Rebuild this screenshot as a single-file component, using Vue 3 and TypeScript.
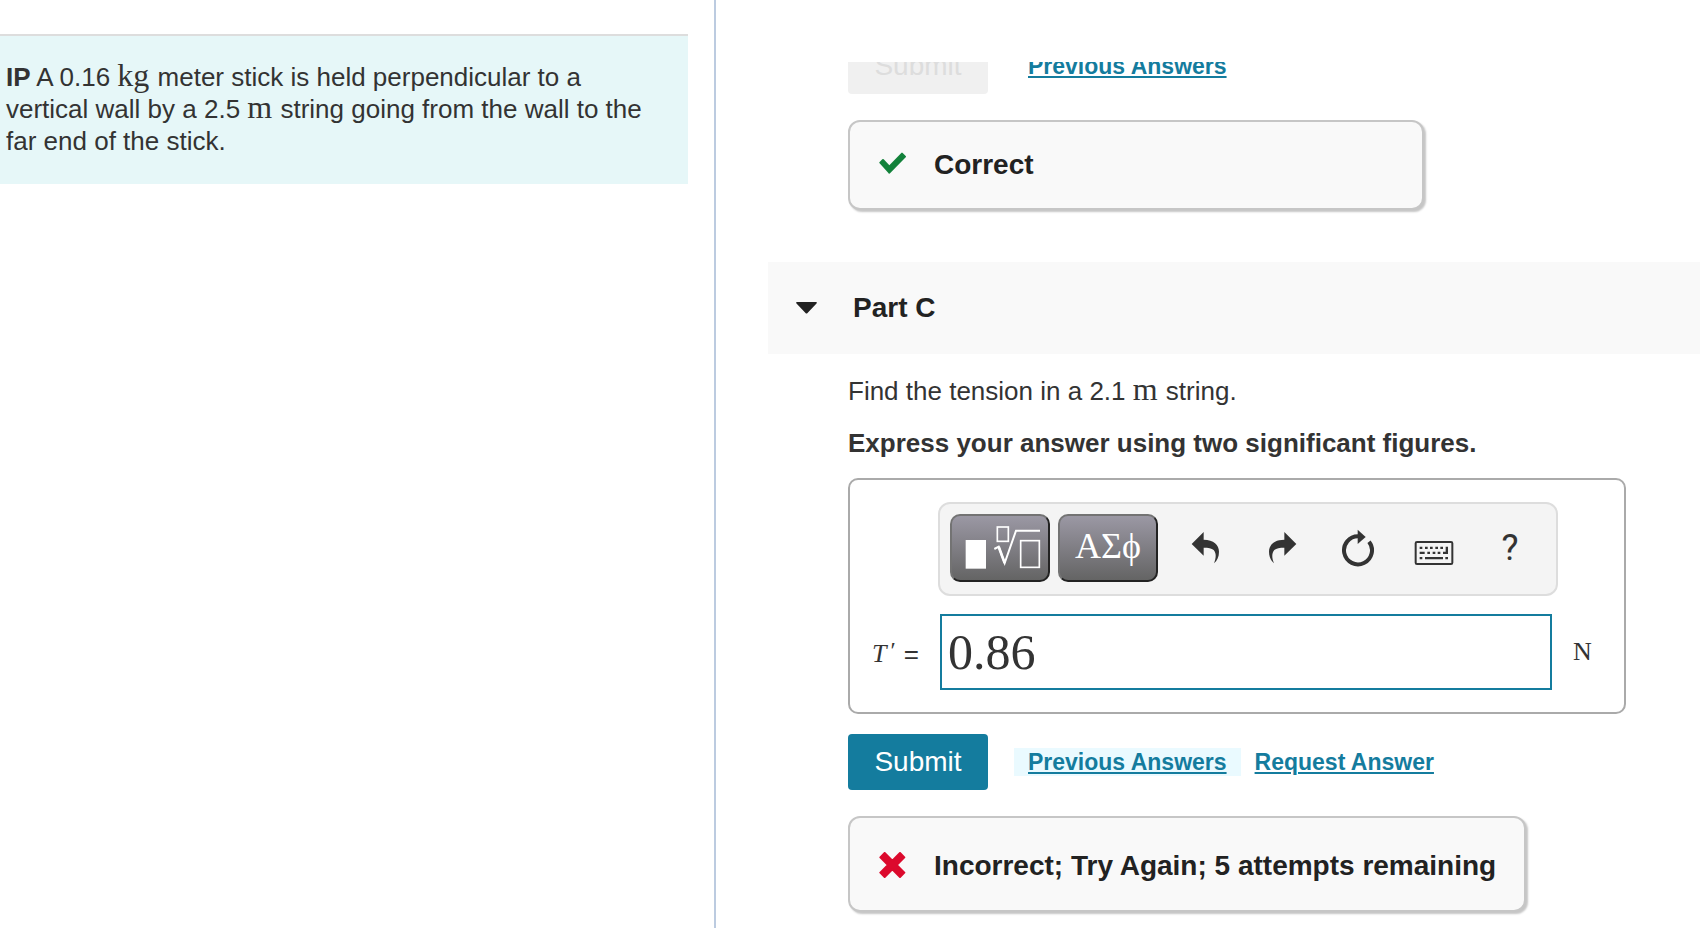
<script setup lang="ts">
import { ref } from 'vue'

const answer = ref<string>('0.86')
const expanded = ref<boolean>(true)
const attemptsRemaining = 5
</script>

<template>
  <div class="page">
    <aside class="problem-pane">
      <section class="problem">
        <p>
          <b>IP</b> A 0.16 <span class="unit">kg</span> meter stick is held perpendicular to a
          vertical wall by a 2.5 <span class="unit">m</span> string going from the wall to the far
          end of the stick.
        </p>
      </section>
    </aside>

    <main class="work-pane">
      <div class="scroller">
        <section class="part previous-part">
          <div class="actions">
            <button class="submit" type="button" disabled>Submit</button>
            <a class="link first" href="#previous-b">Previous Answers</a>
          </div>
          <div class="feedback correct" role="status">
            <svg class="mark" viewBox="0 0 84 84" aria-hidden="true">
              <path
                d="M7 35 L15 27 L34 47 L72 8 L81 17 L34 65Z"
                fill="#13823b"
                stroke="#13823b"
                stroke-width="6"
                stroke-linejoin="round"
              />
            </svg>
            <span>Correct</span>
          </div>
        </section>

        <h2 class="part-header">
          <button type="button" :aria-expanded="expanded" @click="expanded = !expanded">
            <svg class="caret" viewBox="0 0 21 12" aria-hidden="true">
              <path d="M1 0 H20 Q21.500 0.500 20.500 1.500 L11.500 11 Q10.500 12 9.500 11 L0.500 1.500 Q-0.500 0.500 1 0Z" fill="#222" />
            </svg>
            <span>Part C</span>
          </button>
        </h2>

        <section v-show="expanded" class="part">
          <p class="question">Find the tension in a 2.1 <span class="unit">m</span> string.</p>
          <p class="instruction">Express your answer using two significant figures.</p>

          <div class="answer-box">
            <div class="toolbar" role="toolbar" aria-label="Math tools">
              <button class="palette" type="button" aria-label="Templates">
                <svg viewBox="36 33 288 192" aria-hidden="true">
                  <rect x="77" y="105" width="61" height="86" fill="#fff" />
                  <g fill="none" stroke="#fff">
                    <rect x="172" y="66" width="33" height="43" stroke-width="5" />
                    <rect x="242" y="107" width="56" height="80" stroke-width="5" />
                    <path d="M163 132 L176 125 L194 174 L228 77 H300" stroke-width="6" />
                    <path d="M176 125 L194 174" stroke-width="8" />
                  </g>
                </svg>
              </button>
              <button class="palette greek" type="button" aria-label="Greek letters">ΑΣϕ</button>
              <div class="tools">
                <button type="button" aria-label="Undo">
                  <svg viewBox="81 114 120 120" aria-hidden="true">
                    <path d="M98 162 L134 126 V149 C164 149 180 164 180 185 C180 201 174 212 165 220 C172 202 172 190 164 180 C158 174 148 173 134 173 V197Z" />
                  </svg>
                </button>
                <button type="button" aria-label="Redo">
                  <svg viewBox="309 114 120 120" aria-hidden="true">
                    <path d="M412 162 L376 126 V149 C346 149 330 164 330 185 C330 201 336 212 345 220 C338 202 338 190 346 180 C352 174 362 173 376 173 V197Z" />
                  </svg>
                </button>
                <button type="button" aria-label="Reset">
                  <svg viewBox="540 114 120 120" aria-hidden="true">
                    <path d="M601 139 A42 42 0 1 0 633 155" fill="none" stroke="#333" stroke-width="12" />
                    <path d="M599 119 L623 141 L599 162Z" />
                  </svg>
                </button>
                <button type="button" aria-label="Keyboard shortcuts">
                  <svg viewBox="108 174 120 120" aria-hidden="true">
                    <rect x="113" y="216" width="110" height="66" rx="4" fill="none" stroke="#333" stroke-width="6" />
                    <path
                      d="M125 230h8v7h-8z M141 230h8v7h-8z M156 230h8v7h-8z M172 230h8v7h-8z M187 230h8v7h-8z M203 230h7v22h-15v-7h8z M125 245h15v7h-15z M148 245h8v7h-8z M164 245h8v7h-8z M179 245h8v7h-8z M125 261h8v7h-8z M141 261h54v7h-54z M202 261h8v7h-8z"
                    />
                  </svg>
                </button>
                <button class="help" type="button" aria-label="Help">?</button>
              </div>
            </div>

            <div class="entry">
              <label for="tension"><i>T</i><sup>′</sup><span>=</span></label>
              <input id="tension" v-model="answer" type="text" autocomplete="off" />
              <span class="newton">N</span>
            </div>
          </div>

          <div class="actions">
            <button class="submit" type="button">Submit</button>
            <a class="link first highlighted" href="#previous-c">Previous Answers</a>
            <a class="link" href="#request">Request Answer</a>
          </div>
          <div class="feedback incorrect" role="status">
            <svg class="mark" viewBox="0 0 84 84" aria-hidden="true">
              <path
                d="M43 26 L66 3 L79 16 L56 39 L79 62 L66 75 L43 52 L20 75 L7 62 L30 39 L7 16 L20 3Z"
                fill="#dc0a2d"
                stroke="#dc0a2d"
                stroke-width="6"
                stroke-linejoin="round"
              />
            </svg>
            <span>Incorrect; Try Again; {{ attemptsRemaining }} attempts remaining</span>
          </div>
        </section>
      </div>
    </main>
  </div>
</template>

<style>
body {
  margin: 0;
  background: #fff;
}
</style>

<style scoped>
* {
  box-sizing: border-box;
}

.page {
  display: flex;
  min-height: 100vh;
  color: #333;
  font-family: 'Liberation Sans', Arial, sans-serif;
  font-size: 26px;
  line-height: 32px;
}

p,
h2 {
  margin: 0;
}

button {
  margin: 0;
  padding: 0;
  border: 0;
  background: none;
  color: inherit;
  font: inherit;
  cursor: pointer;
}

.unit {
  margin-right: 1px;
  font-family: 'Liberation Serif', 'Times New Roman', serif;
  font-size: 32px;
  line-height: 24px;
}

.problem-pane {
  flex: 0 0 42%;
  padding: 34px 26px 0 0;
}

.problem {
  padding: 25px 24px 27px 6px;
  border-top: 2px solid #ddd;
  background: #e6f7f8;
}

.work-pane {
  flex: 1;
  min-width: 0;
  padding-top: 62px;
  border-left: 2px solid #bccbe0;
}

.scroller {
  overflow: hidden;
  padding: 0 0 16px 52px;
}

.part {
  padding-left: 80px;
}

.previous-part {
  margin-top: -24px;
}

.actions {
  display: flex;
  align-items: center;
}

.submit {
  width: 140px;
  height: 56px;
  border-radius: 4px;
  background: #147c9e;
  color: #fff;
  font-size: 28px;
}

.submit:disabled {
  background: #f0f0f0;
  color: #ddd;
  cursor: default;
}

.link {
  padding: 0 14px;
  color: #147c9e;
  font-size: 23px;
  font-weight: bold;
  line-height: 28px;
  text-decoration-thickness: 2px;
  text-underline-offset: 2px;
}

.first {
  margin-left: 26px;
}

.highlighted {
  background: #eafaff;
}

.feedback {
  display: flex;
  align-items: center;
  max-width: 100%;
  margin-top: 26px;
  padding: 0 24px 0 28px;
  border: 2px solid #c6c6c6;
  border-radius: 12px;
  background: #f9f9f9;
  box-shadow: 2px 2px 2px #c6c6c6;
  color: #222;
  font-size: 28px;
  font-weight: bold;
}

.correct {
  width: 576px;
  height: 90px;
}

.incorrect {
  width: 678px;
  height: 96px;
  padding-top: 4px;
  white-space: nowrap;
}

.mark {
  flex: none;
  width: 28px;
  height: 28px;
  margin-right: 28px;
}

.part-header {
  margin-top: 52px;
  background: #f9f9f9;
  color: #222;
  font-size: 28px;
  font-weight: bold;
}

.part-header button {
  display: flex;
  align-items: center;
  width: 100%;
  height: 92px;
  padding-left: 28px;
  text-align: left;
}

.caret {
  width: 21px;
  height: 12px;
  margin-right: 36px;
}

.question {
  margin-top: 21px;
}

.instruction {
  margin-top: 20px;
  font-weight: bold;
}

.answer-box {
  width: 778px;
  max-width: 100%;
  margin: 19px 0 20px;
  padding: 22px 0;
  border: 2px solid #aaa;
  border-radius: 10px;
}

.toolbar {
  display: flex;
  gap: 8px;
  height: 94px;
  margin: 0 66px 18px 88px;
  padding: 10px 8px 10px 10px;
  border: 2px solid #ddd;
  border-radius: 12px;
  background: #f4f4f4;
}

.palette {
  flex: none;
  width: 100px;
  height: 68px;
  border: 2px solid;
  border-color: #737373 #222 #222 #737373;
  border-radius: 10px;
  background: linear-gradient(#9b98a4, #646464);
  color: #fff;
}

.palette svg {
  display: block;
  width: 96px;
  height: 64px;
}

.greek {
  padding-bottom: 4px;
  font-family: 'Liberation Serif', 'Times New Roman', serif;
  font-size: 36px;
}

.tools {
  display: flex;
  flex: 1;
  height: 68px;
  margin-left: 2px;
}

.tools button {
  display: flex;
  flex: 1;
  align-items: center;
  justify-content: center;
}

.tools svg {
  width: 40px;
  height: 40px;
  fill: #333;
}

.tools .help {
  font-family: Roboto, sans-serif;
  font-size: 36px;
}

.entry {
  display: flex;
  align-items: center;
}

.entry label {
  display: flex;
  flex: none;
  align-items: center;
  width: 90px;
  padding: 4px 0 0 22px;
  font-family: 'Liberation Serif', 'Times New Roman', serif;
}

.entry sup {
  align-self: flex-start;
  margin-left: 4px;
  font-size: 24px;
  line-height: 24px;
}

.entry label span {
  margin-left: 8px;
  font-family: 'Liberation Sans', Arial, sans-serif;
  font-size: 26px;
}

.entry input {
  flex: 1;
  min-width: 0;
  height: 76px;
  padding: 0 6px;
  border: 2px solid #147c9e;
  border-radius: 0;
  outline: 0;
  background: #fff;
  color: #333;
  font-family: 'Liberation Serif', 'Times New Roman', serif;
  font-size: 50px;
}

.newton {
  width: 72px;
  padding-left: 21px;
  font-family: 'Liberation Serif', 'Times New Roman', serif;
}
</style>
